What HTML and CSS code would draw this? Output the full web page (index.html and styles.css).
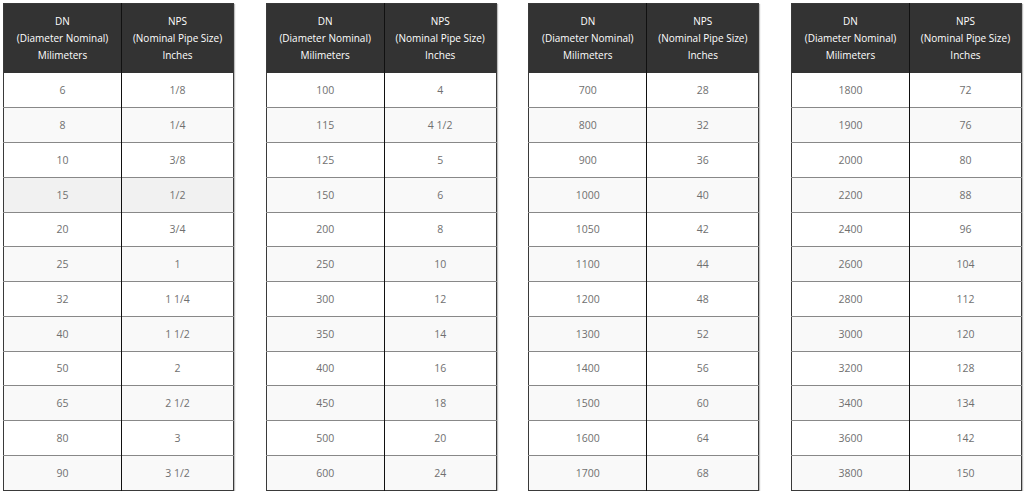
FILE: index.html
```html
<!DOCTYPE html>
<html>
<head>
<meta charset="utf-8">
<link rel="stylesheet" href="styles.css">
</head>
<body>
<div class="wrap">
  <table class="pipe">
    <thead><tr><th>DN<br>(Diameter Nominal)<br>Milimeters</th><th>NPS<br>(Nominal Pipe Size)<br>Inches</th></tr></thead>
    <tbody>
      <tr><td>6</td><td>1/8</td></tr>
      <tr><td>8</td><td>1/4</td></tr>
      <tr><td>10</td><td>3/8</td></tr>
      <tr class="hover"><td>15</td><td>1/2</td></tr>
      <tr><td>20</td><td>3/4</td></tr>
      <tr><td>25</td><td>1</td></tr>
      <tr><td>32</td><td>1 1/4</td></tr>
      <tr><td>40</td><td>1 1/2</td></tr>
      <tr><td>50</td><td>2</td></tr>
      <tr><td>65</td><td>2 1/2</td></tr>
      <tr><td>80</td><td>3</td></tr>
      <tr><td>90</td><td>3 1/2</td></tr>
    </tbody>
  </table>
  <table class="pipe">
    <thead><tr><th>DN<br>(Diameter Nominal)<br>Milimeters</th><th>NPS<br>(Nominal Pipe Size)<br>Inches</th></tr></thead>
    <tbody>
      <tr><td>100</td><td>4</td></tr>
      <tr><td>115</td><td>4 1/2</td></tr>
      <tr><td>125</td><td>5</td></tr>
      <tr><td>150</td><td>6</td></tr>
      <tr><td>200</td><td>8</td></tr>
      <tr><td>250</td><td>10</td></tr>
      <tr><td>300</td><td>12</td></tr>
      <tr><td>350</td><td>14</td></tr>
      <tr><td>400</td><td>16</td></tr>
      <tr><td>450</td><td>18</td></tr>
      <tr><td>500</td><td>20</td></tr>
      <tr><td>600</td><td>24</td></tr>
    </tbody>
  </table>
  <table class="pipe">
    <thead><tr><th>DN<br>(Diameter Nominal)<br>Milimeters</th><th>NPS<br>(Nominal Pipe Size)<br>Inches</th></tr></thead>
    <tbody>
      <tr><td>700</td><td>28</td></tr>
      <tr><td>800</td><td>32</td></tr>
      <tr><td>900</td><td>36</td></tr>
      <tr><td>1000</td><td>40</td></tr>
      <tr><td>1050</td><td>42</td></tr>
      <tr><td>1100</td><td>44</td></tr>
      <tr><td>1200</td><td>48</td></tr>
      <tr><td>1300</td><td>52</td></tr>
      <tr><td>1400</td><td>56</td></tr>
      <tr><td>1500</td><td>60</td></tr>
      <tr><td>1600</td><td>64</td></tr>
      <tr><td>1700</td><td>68</td></tr>
    </tbody>
  </table>
  <table class="pipe">
    <thead><tr><th>DN<br>(Diameter Nominal)<br>Milimeters</th><th>NPS<br>(Nominal Pipe Size)<br>Inches</th></tr></thead>
    <tbody>
      <tr><td>1800</td><td>72</td></tr>
      <tr><td>1900</td><td>76</td></tr>
      <tr><td>2000</td><td>80</td></tr>
      <tr><td>2200</td><td>88</td></tr>
      <tr><td>2400</td><td>96</td></tr>
      <tr><td>2600</td><td>104</td></tr>
      <tr><td>2800</td><td>112</td></tr>
      <tr><td>3000</td><td>120</td></tr>
      <tr><td>3200</td><td>128</td></tr>
      <tr><td>3400</td><td>134</td></tr>
      <tr><td>3600</td><td>142</td></tr>
      <tr><td>3800</td><td>150</td></tr>
    </tbody>
  </table>
</div>
</body>
</html>
```
FILE: styles.css
```css
html, body {
  margin: 0;
  padding: 0;
  background: #fff;
}
body {
  font-family: "Open Sans", "Liberation Sans", sans-serif;
}
.wrap {
  display: flex;
  gap: 31.67px;
  padding: 3px 0 0 3px;
}
.pipe {
  width: 231px;
  border-collapse: collapse;
  table-layout: fixed;
  border: 1px solid #3a3a3a;
  box-shadow: 1px 1px 1px rgba(0,0,0,0.25);
}
.pipe th {
  background: #333;
  color: #fff;
  font-size: 10px;
  font-weight: 400;
  line-height: 17px;
  height: 69px;
  padding: 0;
  text-align: center;
  vertical-align: middle;
}
.pipe th:first-child {
  width: 117px;
}
.pipe th + th {
  border-left: 1px solid #111;
}
.pipe tbody tr {
  height: 34.75px;
  background: #fff;
}
.pipe tbody tr:nth-child(even) {
  background: #f9f9f9;
}
.pipe tbody tr.hover {
  background: #f1f1f1;
}
.pipe td {
  padding: 0;
  text-align: center;
  vertical-align: middle;
  font-size: 10.5px;
  color: #707070;
  border-top: 1px solid #888;
}
.pipe td + td {
  border-left: 1px solid #111;
}
.pipe tbody tr:first-child td {
  border-top: none;
}
```
